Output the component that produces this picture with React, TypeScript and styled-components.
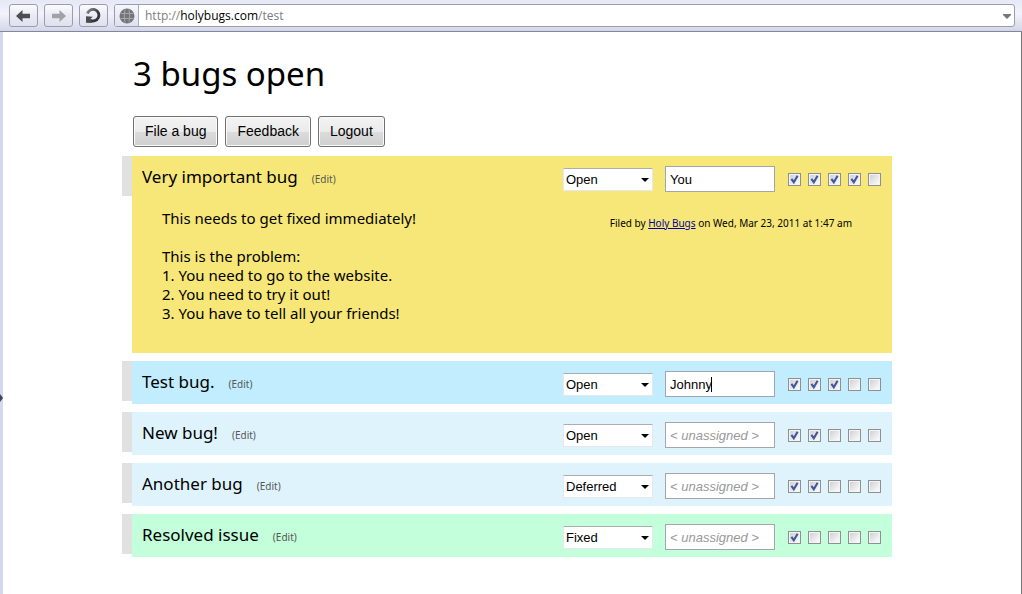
import React, { useState } from "react";
import styled, { createGlobalStyle } from "styled-components";

const humanist = `"Lucida Sans Unicode", "Lucida Grande", "Noto Sans", sans-serif`;
const grotesque = `"Liberation Sans", Arial, sans-serif`;

const GlobalStyle = createGlobalStyle`
  *, *::before, *::after { box-sizing: border-box; }
  body { margin: 0; background: #fff; color: #000; font-family: ${humanist}; }
`;

const Browser = styled.div`
  display: flex;
  flex-direction: column;
  min-height: 100vh;
`;

const Toolbar = styled.nav`
  display: flex;
  align-items: center;
  gap: 6px;
  height: 32px;
  padding: 0 7px 0 9px;
  background: linear-gradient(#e6e8f6, #f1f2fb 45%, #d3d6e6);
  border-bottom: 1px solid #8187a0;
`;

const ToolButton = styled.button`
  display: flex;
  align-items: center;
  justify-content: center;
  width: 29px;
  height: 23px;
  padding: 0;
  background: linear-gradient(#fbfbfe, #e9eaf4 50%, #dfe1ee);
  border: 1px solid #9a9dae;
  border-radius: 3px;
`;

const AddressBar = styled.div`
  display: flex;
  flex: 1;
  height: 23px;
  background: #fff;
  border: 1px solid #9a9dae;
  border-radius: 3px;
`;

const SiteButton = styled.button`
  display: flex;
  align-items: center;
  justify-content: center;
  width: 24px;
  padding: 0;
  background: linear-gradient(#f6f6fb, #dfe1ee);
  border: 0;
  border-right: 1px solid #a9acba;
  border-radius: 2px 0 0 2px;
`;

const Address = styled.div`
  flex: 1;
  padding-left: 6px;
  font: 12px/21px "Segoe UI", "Open Sans", sans-serif;
  color: #7d7d7d;
  outline: 0;

  strong {
    font-weight: 400;
    color: #000;
  }
`;

const HistoryButton = styled.button`
  display: flex;
  align-items: center;
  justify-content: center;
  width: 14px;
  padding: 2px 0 0;
  background: none;
  border: 0;
`;

const Viewport = styled.div`
  display: flex;
  flex: 1;
  border-right: 1px solid #74747c;
`;

const PanelToggle = styled.button`
  display: flex;
  align-items: center;
  width: 3px;
  padding: 170px 0 0;
  background: #d3d8ee;
  border: 0;
  overflow: hidden;
`;

const Page = styled.main`
  flex: 1;
  width: 100%;
  max-width: 780px;
  margin: 0 auto;
  padding: 20px 0;
`;

const Title = styled.h1`
  margin: 0 0 20px 11px;
  font-size: 33px;
  font-weight: 400;
  line-height: 44px;
`;

const Actions = styled.div`
  display: flex;
  gap: 7px;
  margin: 0 0 9px 11px;
`;

const ActionButton = styled.button`
  height: 31px;
  padding: 0 11px 1px;
  font: 14px/28px ${grotesque};
  color: #000;
  background: linear-gradient(#f3f3f3, #ebebeb 50%, #dcdcdc 51%, #cfcfcf);
  border: 1px solid #707070;
  border-radius: 3px;
  box-shadow: inset 0 0 0 1px #fafafa;
`;

const BugList = styled.ul`
  display: flex;
  flex-direction: column;
  gap: 8px;
  margin: 0;
  padding: 0 10px 0 0;
  list-style: none;
`;

const BugItem = styled.li`
  display: flex;
  align-items: flex-start;
`;

const Handle = styled.span`
  width: 10px;
  height: 40px;
  background: #e1e1e1;
  cursor: move;
`;

const Card = styled.article<{ $color: string }>`
  flex: 1;
  background: ${(p) => p.$color};
`;

const CardHeader = styled.header`
  display: flex;
  align-items: center;
  padding: 10px 11px 7px 10px;
`;

const BugTitle = styled.h2`
  margin: 0 14px 4px 0;
  font-size: 17px;
  font-weight: 400;
  line-height: 22px;
`;

const EditLink = styled.a`
  flex: 1;
  font-size: 10px;
  line-height: 14px;
  color: #555;
  text-decoration: none;
`;

const SelectBox = styled.span`
  position: relative;
  display: flex;
  margin-right: 12px;

  svg {
    position: absolute;
    top: 10px;
    right: 4px;
    pointer-events: none;
  }
`;

const StatusSelect = styled.select`
  appearance: none;
  width: 90px;
  height: 23px;
  padding: 1px 2px 0;
  font: 13px/20px ${grotesque};
  color: #000;
  background: #fff;
  border: 1px solid #e3e9ef;
  border-top-color: #abadb3;
  border-radius: 1px;
`;

const AssigneeBox = styled.span`
  position: relative;
  display: flex;
  margin-right: 13px;
`;

const AssigneeInput = styled.input`
  width: 110px;
  height: 26px;
  padding: 0 4px;
  font: 13px/20px ${grotesque};
  color: #000;
  background: #fff;
  border: 1px solid #a3a6ac;
  outline: 0;

  &::placeholder {
    font-style: italic;
    color: #999;
    opacity: 1;
  }
`;

const Caret = styled.span`
  position: absolute;
  top: 6px;
  left: 46px;
  width: 1px;
  height: 15px;
  background: #000;
`;

const Priority = styled.fieldset`
  display: flex;
  gap: 7px;
  margin: 0;
  padding: 0;
  border: 0;
`;

const Tick = styled.label`
  position: relative;
  display: flex;

  svg {
    position: absolute;
    inset: 0;
    pointer-events: none;
  }
`;

const TickInput = styled.input`
  appearance: none;
  width: 13px;
  height: 13px;
  margin: 0;
  background: linear-gradient(135deg, #c9cdd3, #f6f6f6 80%);
  border: 1px solid #8e8f8f;
  box-shadow: inset 0 0 0 1px #f4f4f4;
`;

const CardBody = styled.div`
  display: flex;
  justify-content: space-between;
  padding: 10px 40px 30px 30px;
`;

const Description = styled.p`
  margin: 0;
  font-size: 15px;
  line-height: 19px;
  white-space: pre-line;
`;

const Filed = styled.p`
  margin: 7px 0 0;
  font-size: 10px;
  line-height: 14px;

  a { color: #00009c; }
`;

interface Bug {
  title: string;
  status: string;
  assignee: string;
  priority: number;
  color: string;
  focused?: boolean;
  description?: string;
}

const bugs: Bug[] = [
  {
    title: "Very important bug",
    status: "Open",
    assignee: "You",
    priority: 4,
    color: "#f7e778",
    description:
      "This needs to get fixed immediately!\n\nThis is the problem:\n1. You need to go to the website.\n2. You need to try it out!\n3. You have to tell all your friends!",
  },
  { title: "Test bug.", status: "Open", assignee: "Johnny", priority: 3, color: "#c1edff", focused: true },
  { title: "New bug!", status: "Open", assignee: "", priority: 2, color: "#dff3fd" },
  { title: "Another bug", status: "Deferred", assignee: "", priority: 2, color: "#dff3fd" },
  { title: "Resolved issue", status: "Fixed", assignee: "", priority: 1, color: "#c2ffda" },
];

function PriorityTick({ level, initial }: { level: number; initial: boolean }) {
  const [on, setOn] = useState(initial);
  return (
    <Tick>
      <TickInput type="checkbox" checked={on} onChange={() => setOn(!on)} aria-label={`Priority ${level}`} />
      {on && (
        <svg width="13" height="13" viewBox="0 0 13 13" aria-hidden="true">
          <path d="M3.4 5.8 5.8 9.2 9.6 2.8" fill="none" stroke="#44579b" strokeWidth="2.1" />
        </svg>
      )}
    </Tick>
  );
}

function BugRow({ bug }: { bug: Bug }) {
  return (
    <BugItem>
      <Handle />
      <Card $color={bug.color}>
        <CardHeader>
          <BugTitle>{bug.title}</BugTitle>
          <EditLink href="#edit">(Edit)</EditLink>
          <SelectBox>
            <StatusSelect defaultValue={bug.status} aria-label="Status">
              <option>Open</option>
              <option>Deferred</option>
              <option>Fixed</option>
            </StatusSelect>
            <svg width="8" height="4" viewBox="0 0 8 4" aria-hidden="true">
              <path d="M0 0h8L4 4z" fill="#000" />
            </svg>
          </SelectBox>
          <AssigneeBox>
            <AssigneeInput defaultValue={bug.assignee} placeholder="< unassigned >" aria-label="Assignee" />
            {bug.focused && <Caret />}
          </AssigneeBox>
          <Priority aria-label="Priority">
            {[1, 2, 3, 4, 5].map((n) => (
              <PriorityTick key={n} level={n} initial={n <= bug.priority} />
            ))}
          </Priority>
        </CardHeader>
        {bug.description && (
          <CardBody>
            <Description>{bug.description}</Description>
            <Filed>
              Filed by <a href="#user">Holy Bugs</a> on Wed, Mar 23, 2011 at 1:47 am
            </Filed>
          </CardBody>
        )}
      </Card>
    </BugItem>
  );
}

export default function App() {
  return (
    <>
      <GlobalStyle />
      <Browser>
        <Toolbar aria-label="Browser">
          <ToolButton aria-label="Back">
            <svg width="15" height="12" viewBox="0 0 15 12">
              <path d="M0 6 6.5 0v3.8H14v4.4H6.5V12z" fill="#4b4d51" />
            </svg>
          </ToolButton>
          <ToolButton aria-label="Forward">
            <svg width="15" height="12" viewBox="0 0 15 12">
              <path d="M15 6 8.5 0v3.8H1v4.4h7.5V12z" fill="#a0a2a8" />
            </svg>
          </ToolButton>
          <ToolButton aria-label="Reload">
            <svg width="17" height="16" viewBox="0 0 17 16">
              <defs>
                <linearGradient id="reload" x1="0" y1="0" x2="1" y2="1">
                  <stop offset="0" stopColor="#8a8c90" />
                  <stop offset="0.6" stopColor="#33353a" />
                </linearGradient>
              </defs>
              <path d="M2.5 5.5A5.8 5.8 0 1 1 5.2 12.2" fill="none" stroke="url(#reload)" strokeWidth="2.8" />
              <path d="M1 8.200 7.800 8.800 5.600 10.800 7 15 1 14.800z" fill="#4b4d51" />
            </svg>
          </ToolButton>
          <AddressBar>
            <SiteButton aria-label="Site information">
              <svg width="16" height="16" viewBox="0 0 16 16">
                <circle cx="8" cy="8" r="7.5" fill="#737578" />
                <g fill="none" stroke="#a5a6a9" strokeWidth="1">
                  <path d="M1.5 5.5h13M1.5 10.5h13" />
                  <path d="M6 1.500Q4.500 8 6 14.500M10 1.500Q11.500 8 10 14.500" />
                </g>
              </svg>
            </SiteButton>
            <Address role="textbox" aria-label="Address" contentEditable suppressContentEditableWarning spellCheck={false}>
              http://<strong>holybugs.com</strong>/test
            </Address>
            <HistoryButton aria-label="Address history">
              <svg width="8" height="5" viewBox="0 0 8 5">
                <path d="M0 0h8v1L4 5 0 1z" fill="#777" />
              </svg>
            </HistoryButton>
          </AddressBar>
        </Toolbar>
        <Viewport>
          <PanelToggle aria-label="Show panels">
            <svg width="3" height="8" viewBox="0 0 3 8">
              <path d="M0 0 3 4 0 8z" fill="#3c4260" />
            </svg>
          </PanelToggle>
          <Page>
            <Title>3 bugs open</Title>
            <Actions>
              <ActionButton>File a bug</ActionButton>
              <ActionButton>Feedback</ActionButton>
              <ActionButton>Logout</ActionButton>
            </Actions>
            <BugList>
              {bugs.map((bug) => (
                <BugRow key={bug.title} bug={bug} />
              ))}
            </BugList>
          </Page>
        </Viewport>
      </Browser>
    </>
  );
}
